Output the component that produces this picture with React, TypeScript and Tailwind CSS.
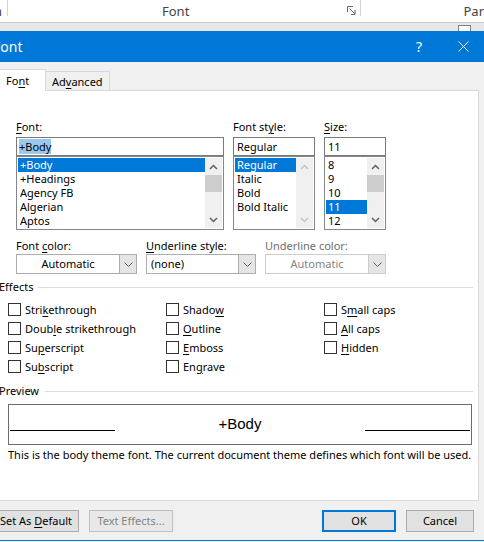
import React from "react";

function U({ children }: { children: React.ReactNode }) {
  return <span className="underline underline-offset-2 decoration-1">{children}</span>;
}

function Chevron({ up, color }: { up: boolean; color: string }) {
  return (
    <svg width="9" height="6" viewBox="0 0 9 6">
      <polyline
        points={up ? "1,5 4.5,1.5 8,5" : "1,1 4.5,4.5 8,1"}
        fill="none"
        stroke={color}
        strokeWidth="1.5"
      />
    </svg>
  );
}

function ListBox({
  items,
  selected,
  width,
  thumb,
}: {
  items: string[];
  selected: number;
  width: string;
  thumb: boolean;
}) {
  const arrow = thumb ? "#606060" : "#c4c4c4";
  return (
    <div className={`${width} h-[74px] border border-[#828790] bg-white p-px flex`}>
      <div className="flex-1 min-w-0">
        {items.map((it, i) => (
          <div
            key={it}
            className={`h-[14px] leading-[14px] pl-[2px] whitespace-nowrap ${
              i === selected ? "bg-[#0078d7] text-white" : ""
            }`}
          >
            {it}
          </div>
        ))}
      </div>
      <div className="w-[17px] bg-[#f0f0f0] flex flex-col">
        <div className="h-[17px] flex items-center justify-center">
          <Chevron up color={arrow} />
        </div>
        {thumb && <div className="h-[17px] bg-[#cdcdcd]" />}
        <div className="flex-1" />
        <div className="h-[17px] flex items-center justify-center">
          <Chevron up={false} color={arrow} />
        </div>
      </div>
    </div>
  );
}

function Combo({
  width,
  text,
  center,
  disabled,
}: {
  width: string;
  text: string;
  center?: boolean;
  disabled?: boolean;
}) {
  const border = disabled ? "border-[#cccccc]" : "border-[#adadad]";
  return (
    <div className={`${width} h-[20px] flex border ${border} bg-white`}>
      <div
        className={`flex-1 leading-[18px] whitespace-nowrap ${center ? "text-center" : "pl-[4px]"} ${
          disabled ? "text-[#838383]" : ""
        }`}
      >
        {text}
      </div>
      <div className={`w-[17px] border-l ${border} bg-[#e5e5e5] flex items-center justify-center`}>
        <svg width="9" height="5" viewBox="0 0 9 5">
          <polyline points="0.5,0.5 4.5,4.5 8.5,0.5" fill="none" stroke="#606060" strokeWidth="1" />
        </svg>
      </div>
    </div>
  );
}

function Check({ children }: { children: React.ReactNode }) {
  return (
    <div className="h-[19px] flex items-center">
      <span className="w-[13px] h-[13px] border border-[#333333] bg-white shrink-0" />
      <span className="ml-[4px] leading-[16px] whitespace-nowrap">{children}</span>
    </div>
  );
}

function Button({
  className,
  children,
  disabled,
  primary,
}: {
  className: string;
  children: React.ReactNode;
  disabled?: boolean;
  primary?: boolean;
}) {
  const look = disabled
    ? "border border-[#bfbfbf] bg-[#e8e8e8] text-[#838383]"
    : primary
    ? "border-2 border-[#0078d7] bg-[#e1e1e1]"
    : "border border-[#adadad] bg-[#e1e1e1]";
  return (
    <div className={`${className} h-[22px] shrink-0 flex items-center justify-center ${look}`}>
      <span className="whitespace-nowrap">{children}</span>
    </div>
  );
}

export default function App() {
  return (
    <div className="w-[484px] h-[542px] overflow-hidden bg-[#f0f0f0] text-[11px] text-black font-['Noto_Sans',sans-serif] flex flex-col">
      {/* ribbon behind the dialog */}
      <div className="h-[22px] shrink-0 bg-white flex text-[#444444] text-[13px]">
        <div className="w-[7px] overflow-hidden flex justify-end pr-[5px] leading-[22px]">n</div>
        <div className="w-px h-[16px] bg-[#d4d4d4]" />
        <div className="w-[354px] flex">
          <span className="pl-[154px] leading-[22px]">Font</span>
          <div className="flex-1" />
          <svg width="9" height="9" viewBox="0 0 9 9" className="mt-[6px] mr-[4px]">
            <path d="M0.5 6 V0.5 H6" fill="none" stroke="#666666" strokeWidth="1" />
            <path d="M2.5 2.5 L8 8 M8 4 V8.5 H4" fill="none" stroke="#666666" strokeWidth="1" />
          </svg>
        </div>
        <div className="w-px h-[16px] bg-[#d4d4d4]" />
        <span className="pl-[102px] leading-[22px] whitespace-nowrap">Par</span>
      </div>
      <div className="h-[9px] shrink-0 border-t border-[#c8c8c8] bg-[#e8e8e8] flex">
        <div className="ml-[458px] mt-[2px] w-[13px] h-[6px] border border-b-0 border-[#808080] bg-white" />
      </div>

      {/* title bar */}
      <div className="h-[31px] shrink-0 bg-[#0078d7] flex items-center text-white">
        <span className="ml-[-7px] text-[14px] leading-[20px]">Font</span>
        <div className="flex-1" />
        <span className="text-[14px] leading-[18px]">?</span>
        <svg width="11" height="11" viewBox="0 0 11 11" className="ml-[36px] mr-[15px]">
          <path d="M0.5 0.5 L10.5 10.5 M10.5 0.5 L0.5 10.5" stroke="white" strokeWidth="1" />
        </svg>
      </div>

      {/* tabs */}
      <div className="h-[28px] shrink-0 flex items-end ml-[-3px]">
        <div className="relative z-10 mb-[-1px] w-[49px] h-[22px] bg-white border-x border-t border-[#d9d9d9] pl-[8px] pt-[3px] leading-[16px]">
          Fo<U>n</U>t
        </div>
        <div className="w-[64px] h-[19px] border-t border-r border-[#d9d9d9] pl-[6px] pt-[2px] leading-[16px]">
          Ad<U>v</U>anced
        </div>
      </div>

      {/* tab panel */}
      <div className="ml-[-4px] w-[483px] h-[411px] shrink-0 border border-[#d9d9d9] bg-white">
        <div className="pt-[28px] pl-[19px] flex">
          <div className="w-[208px]">
            <div className="h-[18px] leading-[16px]">
              <U>F</U>ont:
            </div>
            <div className="h-[19px] border border-[#7a7a7a] pl-[2px] flex items-center">
              <span className="bg-[#99c9ef] leading-[15px]">+Body</span>
            </div>
            <ListBox
              width="w-[208px]"
              items={["+Body", "+Headings", "Agency FB", "Algerian", "Aptos"]}
              selected={0}
              thumb
            />
          </div>
          <div className="w-[82px] ml-[9px]">
            <div className="h-[18px] leading-[16px]">
              Font st<U>y</U>le:
            </div>
            <div className="h-[19px] border border-[#7a7a7a] pl-[3px] leading-[17px]">Regular</div>
            <ListBox
              width="w-[82px]"
              items={["Regular", "Italic", "Bold", "Bold Italic"]}
              selected={0}
              thumb={false}
            />
          </div>
          <div className="w-[62px] ml-[9px]">
            <div className="h-[18px] leading-[16px]">
              <U>S</U>ize:
            </div>
            <div className="h-[19px] border border-[#7a7a7a] pl-[3px] leading-[17px]">11</div>
            <ListBox width="w-[62px]" items={["8", "9", "10", "11", "12"]} selected={3} thumb />
          </div>
        </div>

        <div className="mt-[8px] pl-[19px] flex">
          <div className="w-[121px]">
            <div className="h-[16px] leading-[16px]">
              Font <U>c</U>olor:
            </div>
            <Combo width="w-[121px]" text="Automatic" center />
          </div>
          <div className="w-[110px] ml-[9px]">
            <div className="h-[16px] leading-[16px]">
              <U>U</U>nderline style:
            </div>
            <Combo width="w-[110px]" text="(none)" />
          </div>
          <div className="w-[121px] ml-[9px]">
            <div className="h-[16px] leading-[16px] text-[#6d6d6d]">Underline color:</div>
            <Combo width="w-[121px]" text="Automatic" center disabled />
          </div>
        </div>

        <div className="mt-[5px] h-[16px] flex items-center">
          <span className="ml-[2px] leading-[16px]">Effects</span>
          <div className="flex-1 h-px bg-[#dcdcdc] ml-[5px] mr-[5px]" />
        </div>
        <div className="mt-[5px] ml-[11px] grid grid-cols-[158px_158px_158px]">
          <Check>
            Stri<U>k</U>ethrough
          </Check>
          <Check>
            Shado<U>w</U>
          </Check>
          <Check>
            S<U>m</U>all caps
          </Check>
          <Check>
            Doub<U>l</U>e strikethrough
          </Check>
          <Check>
            <U>O</U>utline
          </Check>
          <Check>
            <U>A</U>ll caps
          </Check>
          <Check>
            Su<U>p</U>erscript
          </Check>
          <Check>
            <U>E</U>mboss
          </Check>
          <Check>
            <U>H</U>idden
          </Check>
          <Check>
            Su<U>b</U>script
          </Check>
          <Check>
            En<U>g</U>rave
          </Check>
        </div>

        <div className="mt-[7px] h-[16px] flex items-center">
          <span className="ml-[2px] leading-[16px]">Preview</span>
          <div className="flex-1 h-px bg-[#dcdcdc] ml-[6px] mr-[5px]" />
        </div>
        <div className="mt-[5px] ml-[11px] w-[464px] h-[41px] border border-[#6d6d6d] flex">
          <div className="ml-px mt-[25px] w-[105px] h-px bg-black" />
          <div className="flex-1 text-center pt-[9px] text-[15px] leading-[20px] font-['Liberation_Sans',sans-serif]">
            +Body
          </div>
          <div className="mr-px mt-[25px] w-[105px] h-px bg-black" />
        </div>
        <div className="mt-[2px] ml-[11px] leading-[16px] whitespace-nowrap">
          This is the body theme font. The current document theme defines which font will be used.
        </div>
      </div>

      {/* buttons */}
      <div className="mt-[9px] flex shrink-0">
        <Button className="ml-[-7px] w-[86px]">
          Set As <U>D</U>efault
        </Button>
        <Button className="ml-[10px] w-[84px]" disabled>
          Text Effects...
        </Button>
        <Button className="ml-[149px] w-[74px]" primary>
          OK
        </Button>
        <Button className="ml-[10px] w-[68px]">Cancel</Button>
      </div>
      <div className="mt-[8px] h-px shrink-0 bg-[#0078d7]" />
    </div>
  );
}
